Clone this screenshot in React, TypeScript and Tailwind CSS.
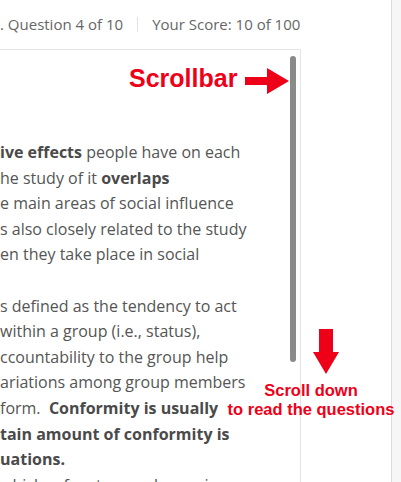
const para1: { t: string; b?: boolean }[][] = [
  [{ t: 'ive effects', b: true }, { t: ' people have on each' }],
  [{ t: 'he study of it ' }, { t: 'overlaps', b: true }],
  [{ t: 'e main areas of social influence' }],
  [{ t: 's also closely related to the study' }],
  [{ t: 'en they take place in social' }],
]

const para2: { t: string; b?: boolean }[][] = [
  [{ t: 's defined as the tendency to act' }],
  [{ t: 'within a group (i.e., status),' }],
  [{ t: 'ccountability to the group help' }],
  [{ t: 'ariations among group members' }],
  [{ t: 'form.\u00a0 ' }, { t: 'Conformity is usually', b: true }],
  [{ t: 'tain amount of conformity is', b: true }],
  [{ t: 'uations.', b: true }],
  [{ t: 'which refers to any change in' }],
]

function Lines({ lines }: { lines: { t: string; b?: boolean }[][] }) {
  return (
    <div>
      {lines.map((line, i) => (
        <div key={i} className="whitespace-pre">
          {line.map((s, j) => (
            <span key={j} className={s.b ? 'font-bold text-[#4a4a4a]' : ''}>{s.t}</span>
          ))}
        </div>
      ))}
    </div>
  )
}

export default function App() {
  return (
    <div className="relative w-[401px] h-[482px] overflow-hidden bg-white flex font-['Open_Sans',sans-serif]">

      {/* Main column */}
      <div className="w-[392px] h-full flex flex-col border-r border-[#dcdcdc]">

        {/* Header */}
        <div className="h-[49px] flex items-center text-[15px] text-[#666] pb-[1px]">
          <span>. Question 4 of 10</span>
          <span className="mx-[14px] w-px h-[15px] bg-[#e2e2e2]" />
          <span>Your Score: 10 of 100</span>
        </div>

        {/* Passage panel */}
        <div className="relative w-[301px] flex-1 border-t border-r border-[#e4e4e4] overflow-hidden">
          <div className="pt-[90px] text-[16px] leading-[25.6px] text-[#555] flex flex-col gap-[25.6px]">
            <Lines lines={para1} />
            <Lines lines={para2} />
          </div>

          {/* Scrollbar thumb */}
          <div className="absolute left-[290px] top-[6px] w-[6px] h-[306px] rounded-full bg-[#8a8a8a]" />
        </div>
      </div>

      {/* Right gutter */}
      <div className="flex-1 bg-[#f6f6f6]" />

      {/* Annotation: Scrollbar */}
      <div className="absolute left-[129px] top-[62px] flex items-center">
        <span className="font-['Liberation_Sans',sans-serif] font-bold text-[25px] leading-[30px] text-[#ee0018]">Scrollbar</span>
        <svg width="44" height="26" viewBox="0 0 44 26" className="ml-[8px] mt-[6px]">
          <path d="M0 9 H22 V0 L44 13 L22 26 V17 H0 Z" fill="#ee0018" />
        </svg>
      </div>

      {/* Annotation: Scroll down */}
      <svg width="26" height="45" viewBox="0 0 26 45" className="absolute left-[313px] top-[329px]">
        <path d="M6 0 H20 V23 H26 L13 45 L0 23 H6 Z" fill="#ee0018" />
      </svg>
      <div className="absolute left-[220px] top-[381px] w-[182px] text-center font-['Liberation_Sans',sans-serif] font-bold text-[16.5px] leading-[19px] text-[#ee0018]">
        <div>Scroll down</div>
        <div>to read the questions</div>
      </div>
    </div>
  )
}
